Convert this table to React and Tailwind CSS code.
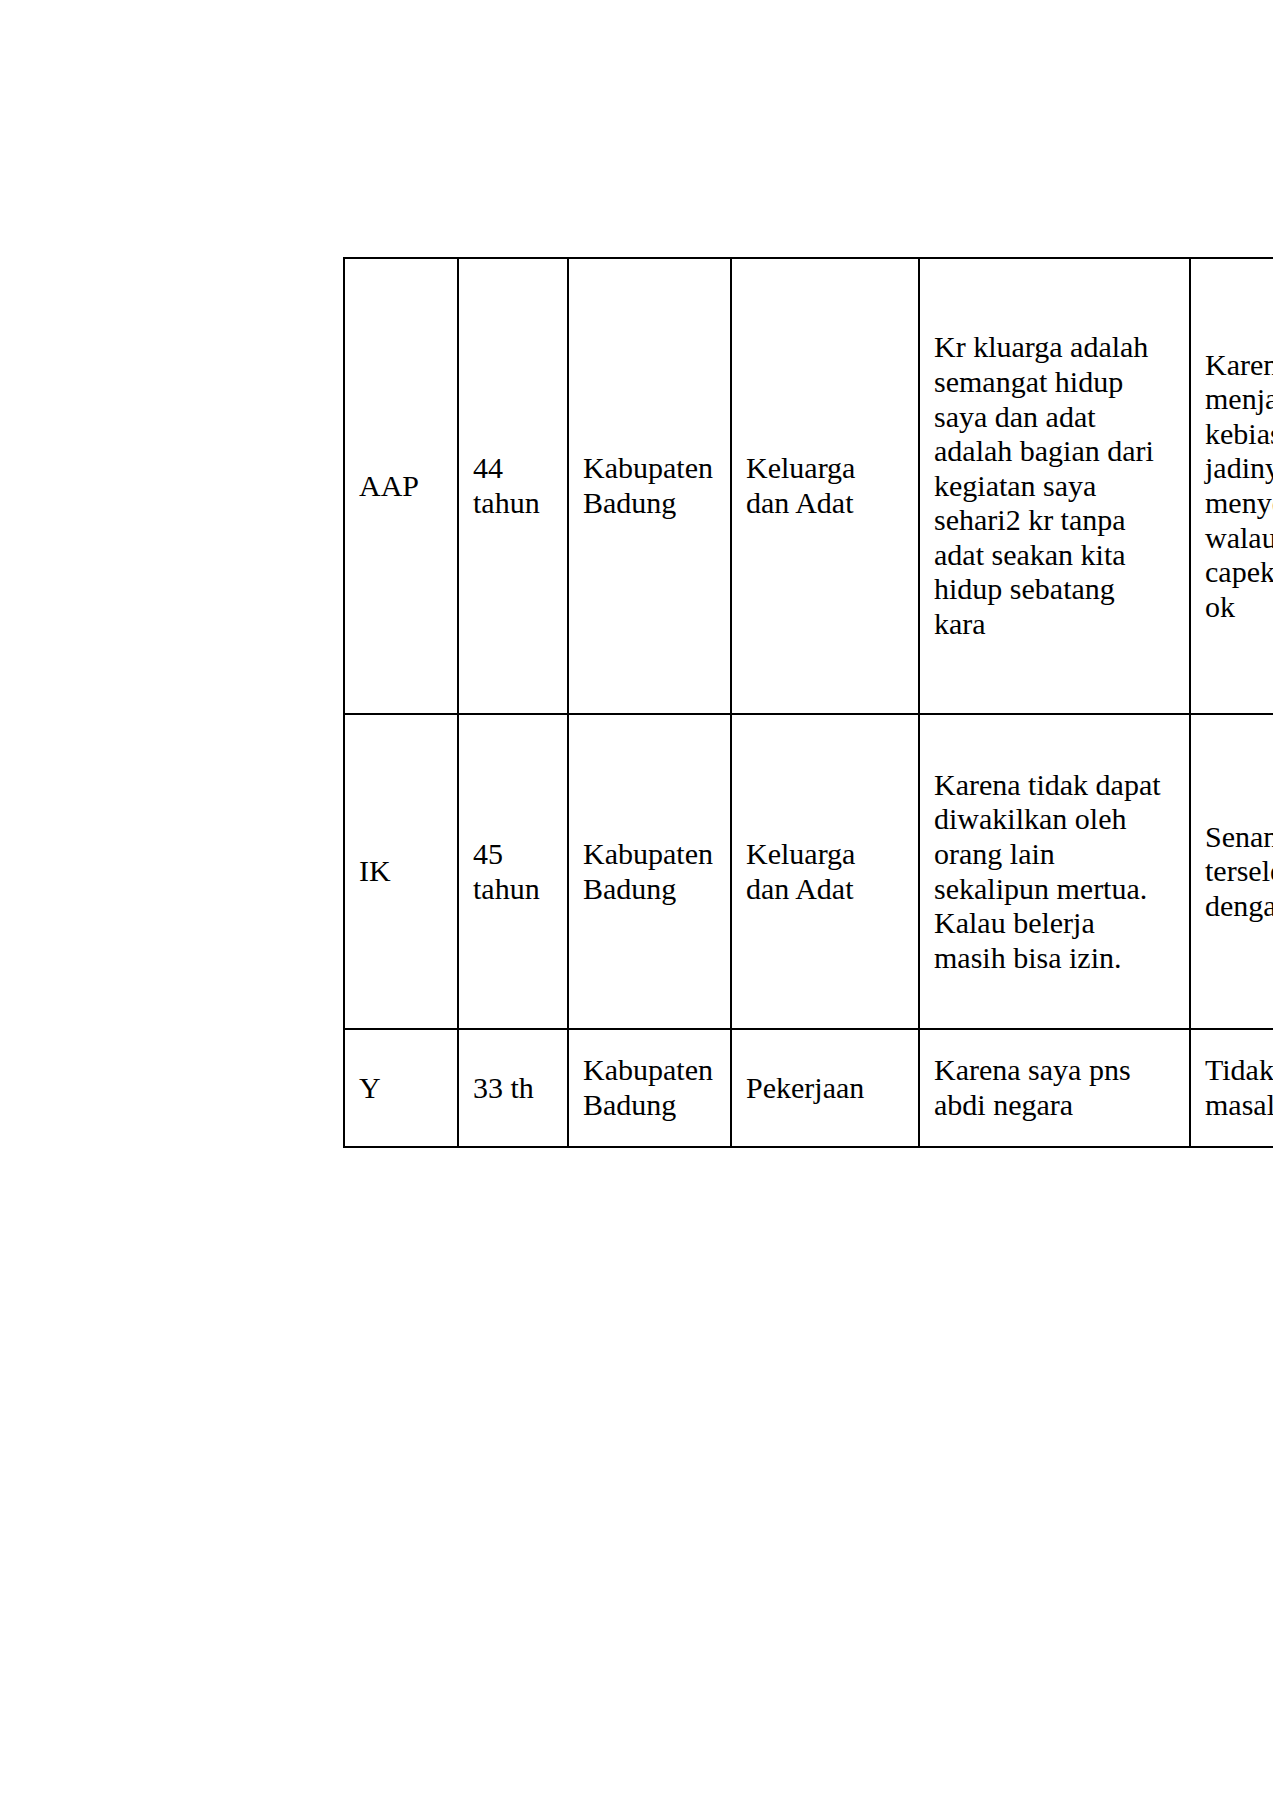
import React from "react";

const rows = [
  {
    h: "h-[456px]",
    cells: [
      ["AAP"],
      ["44", "tahun"],
      ["Kabupaten", "Badung"],
      ["Keluarga", "dan Adat"],
      [
        "Kr kluarga adalah",
        "semangat hidup",
        "saya dan adat",
        "adalah bagian dari",
        "kegiatan saya",
        "sehari2 kr tanpa",
        "adat seakan kita",
        "hidup sebatang",
        "kara",
      ],
      ["Karena", "menjadi", "kebiasaan", "jadinya", "menyenangkan", "walaupun", "capek", "ok"],
    ],
  },
  {
    h: "h-[315px]",
    cells: [
      ["IK"],
      ["45", "tahun"],
      ["Kabupaten", "Badung"],
      ["Keluarga", "dan Adat"],
      [
        "Karena tidak dapat",
        "diwakilkan oleh",
        "orang lain",
        "sekalipun mertua.",
        "Kalau belerja",
        "masih bisa izin.",
      ],
      ["Senang", "terselesaikan", "dengan baik"],
    ],
  },
  {
    h: "h-[118px]",
    cells: [
      ["Y"],
      ["33 th"],
      ["Kabupaten", "Badung"],
      ["Pekerjaan"],
      ["Karena saya pns", "abdi negara"],
      ["Tidak", "masalah"],
    ],
  },
];

export default function App() {
  return (
    <div className="w-full min-h-[1800px] bg-white overflow-hidden">
      <div className="pt-[257px] pl-[343px]">
        <table
          className="border-collapse table-fixed text-black text-[30px] leading-[34.6px]"
          style={{ fontFamily: '"Liberation Serif", "Times New Roman", serif', width: "1146px" }}
        >
          <colgroup>
            <col className="w-[114px]" />
            <col className="w-[110px]" />
            <col className="w-[163px]" />
            <col className="w-[188px]" />
            <col className="w-[271px]" />
            <col className="w-[300px]" />
          </colgroup>
          <tbody>
            {rows.map((r, i) => (
              <tr key={i} className={r.h}>
                {r.cells.map((lines, j) => (
                  <td
                    key={j}
                    className="border-2 border-black align-middle px-[14px] py-0 whitespace-nowrap overflow-hidden"
                  >
                    {lines.map((l, k) => (
                      <div key={k}>{l}</div>
                    ))}
                  </td>
                ))}
              </tr>
            ))}
          </tbody>
        </table>
      </div>
    </div>
  );
}
